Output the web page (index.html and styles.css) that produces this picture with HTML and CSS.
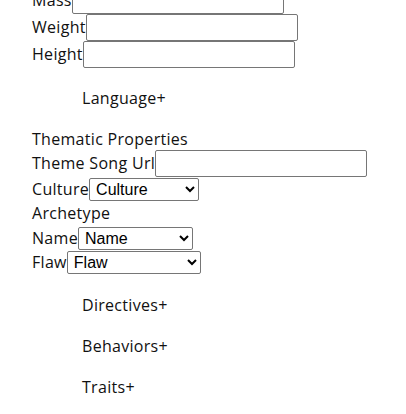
FILE: index.html
```html
<!DOCTYPE html>
<html>
<head>
<meta charset="utf-8">
<link rel="stylesheet" href="styles.css">
</head>
<body>
<div class="page">
  <div class="field"><label>Mass</label><input class="text" type="text"></div>
  <div class="field"><label>Weight</label><input class="text" type="text"></div>
  <div class="field"><label>Height</label><input class="text" type="text"></div>
  <div class="adder">Language+</div>
  <div class="heading">Thematic Properties</div>
  <div class="field"><label>Theme Song Url</label><input class="text" type="text"></div>
  <div class="field sel"><label>Culture</label><select class="culture"><option>Culture</option></select></div>
  <div class="heading arch">Archetype</div>
  <div class="field sel"><label>Name</label><select class="name"><option>Name</option></select></div>
  <div class="field sel"><label>Flaw</label><select class="flaw"><option>Flaw</option></select></div>
  <div class="adder first">Directives+</div>
  <div class="adder">Behaviors+</div>
  <div class="adder">Traits+</div>
</div>
</body>
</html>
```
FILE: styles.css
```css
html, body {
  margin: 0;
  padding: 0;
  background: #fff;
}
.page {
  margin-top: -13px;
  padding-left: 32px;
  font-family: "Open Sans", "Noto Sans", sans-serif;
  font-size: 16px;
  line-height: 21px;
  letter-spacing: 0.3px;
  color: #111;
}
.field {
  display: flex;
  align-items: center;
  height: 27px;
}
.field.sel {
  height: 24px;
  align-items: flex-start;
}
.field.sel label {
  line-height: 24px;
}
.text {
  box-sizing: border-box;
  width: 212px;
  height: 27px;
  margin: 0;
  border: 1px solid #767676;
  border-radius: 2px;
  padding: 1px 2px;
  font-size: 16px;
}
select {
  box-sizing: border-box;
  height: 23px;
  margin: 1px 0 0 0;
  border: 1px solid #767676;
  border-radius: 2px;
  background: #fff;
  color: #000;
  font-family: "Liberation Sans", Arial, sans-serif;
  font-size: 16px;
  letter-spacing: 0;
  padding: 0 2px;
}
.culture { width: 110px; }
.name { width: 115px; }
.flaw { width: 134px; }
.adder {
  margin: 20px 0 20px 50px;
}
.adder.first {
  margin-top: 21px;
}
.heading {
  height: 21px;
}
.heading.arch {
  height: 25px;
  line-height: 25px;
}
```
